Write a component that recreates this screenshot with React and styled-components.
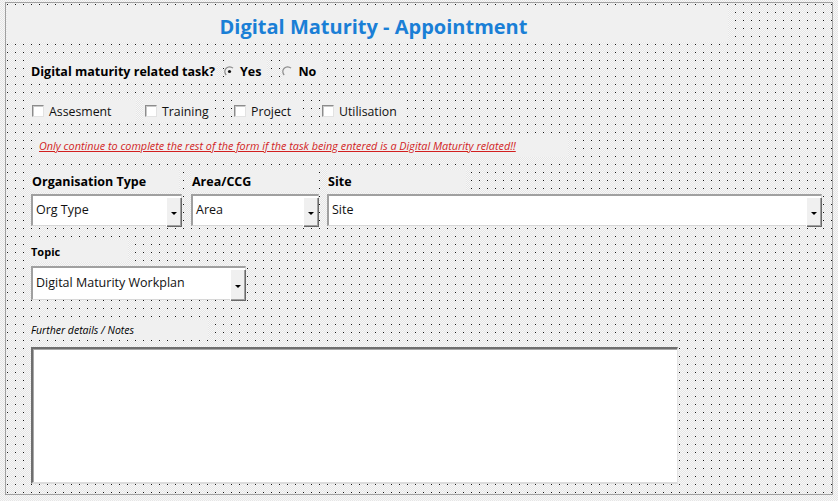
import React from "react"
import styled, { createGlobalStyle } from "styled-components"

const GlobalStyle = createGlobalStyle`
  html, body {
    margin: 0;
    padding: 0;
  }
  body {
    font-family: "Open Sans", "Noto Sans", sans-serif;
    background: #efefef;
  }
`

// hatched designer background, dots go on the form itself
const Page = styled.div`
  width: 838px;
  height: 501px;
  overflow: hidden;
  background-color: #f0f0f0;
  background-image: repeating-conic-gradient(#f7f7f7 0 25%, #e6e6e6 0 50%);
  background-size: 2px 2px;
  padding: 2px 0 0 5px;
  box-sizing: border-box;
`

const Form = styled.div`
  width: 828px;
  height: 493px;
  box-sizing: border-box;
  border: 1px solid #a0a0a0;
  background-color: #f0f0f0;
  background-image:
    conic-gradient(at 1px 1px, transparent 75%, #111 0),
    repeating-conic-gradient(#f7f7f7 0 25%, #e6e6e6 0 50%);
  background-size: 8px 8px, 2px 2px;
  background-position: 1px 1px, 0 0;
  display: flex;
  flex-direction: column;
  padding-left: 24px;
`

const Title = styled.div`
  margin: 2px 0 0 -23px;
  width: 721px;
  height: 37px;
  background: #f0f0f0;
  display: flex;
  align-items: center;
  justify-content: center;
  padding: 5px 0 0 12px;
  box-sizing: border-box;
  color: #1a7fd6;
  font-size: 20px;
  font-weight: 700;
`

const Row = styled.div`
  display: flex;
  align-items: center;
  margin-top: ${p => p.$top}px;
  height: ${p => p.$h || 22}px;
`

const Label = styled.div`
  background: #f0f0f0;
  height: ${p => p.$h || 22}px;
  width: ${p => p.$w}px;
  margin-left: ${p => p.$left || 0}px;
  display: flex;
  align-items: center;
  padding-left: ${p => p.$pad || 1}px;
  box-sizing: border-box;
  color: #000;
  font-size: ${p => p.$size || 12.5}px;
  font-weight: ${p => (p.$bold ? 700 : 400)};
  font-style: ${p => (p.$italic ? "italic" : "normal")};
  white-space: nowrap;
`

const Option = styled.div`
  display: flex;
  align-items: center;
  gap: 5px;
  margin-left: ${p => p.$left}px;
  height: 22px;
  padding-right: 6px;
  background: #f0f0f0;
  font-size: 12.5px;
  font-weight: 700;
`

const Check = styled.div`
  display: flex;
  align-items: center;
  gap: 5px;
  width: ${p => p.$w}px;
  margin-left: ${p => p.$left}px;
  height: 22px;
  padding-left: 2px;
  box-sizing: border-box;
  background: #f0f0f0;
  font-size: 12.3px;
  color: #111;
`

const Box = styled.span`
  width: 12px;
  height: 12px;
  box-sizing: border-box;
  background: #fff;
  border-top: 1px solid #8c8c8c;
  border-left: 1px solid #8c8c8c;
  border-right: 1px solid #e2e2e2;
  border-bottom: 1px solid #e2e2e2;
  box-shadow: inset 1px 1px 0 #c8c8c8;
`

const Warning = styled.div`
  margin: 12px 0 0 5px;
  width: 533px;
  height: 23px;
  background: #f0f0f0;
  display: flex;
  align-items: center;
  padding-left: 4px;
  box-sizing: border-box;
  color: #d21f1f;
  font-size: 10.85px;
  font-style: italic;
  text-decoration: underline;
  white-space: nowrap;
`

const Fields = styled.div`
  display: grid;
  grid-template-columns: 160px 136px 495px;
  margin-top: ${p => p.$top}px;
  margin-left: 1px;
`

const Combo = styled.div`
  position: relative;
  width: ${p => p.$w}px;
  height: ${p => p.$h}px;
  box-sizing: border-box;
  background: #fff;
  border-top: 2px solid #a0a0a0;
  border-left: 2px solid #a0a0a0;
  border-right: 1px solid #d8d8d8;
  border-bottom: 1px solid #d8d8d8;
  display: flex;
  align-items: center;
  padding: 0 0 2px 3px;
  font-size: 12.5px;
  color: #111;
  white-space: nowrap;
`

const DropButton = styled.span`
  position: absolute;
  right: 0;
  top: 1px;
  bottom: -1px;
  width: 15px;
  background: #f0f0f0;
  box-sizing: border-box;
  border-left: 1px solid #fff;
  border-top: 1px solid #fff;
  box-shadow: inset -1px -1px 0 #a0a0a0, 1px 1px 0 #696969;
  display: flex;
  align-items: center;
  justify-content: center;
  &::after {
    content: "";
    border-left: 3px solid transparent;
    border-right: 3px solid transparent;
    border-top: 3px solid #000;
    margin-top: 2px;
  }
`

const Notes = styled.div`
  margin: 7px 0 0 1px;
  width: 647px;
  height: 137px;
  box-sizing: border-box;
  background: #fff;
  border-top: 2px solid #6e6e6e;
  border-left: 2px solid #6e6e6e;
  border-right: 1px solid #e4e4e4;
  border-bottom: 2px solid #dcdcdc;
  box-shadow: inset 1px 1px 0 #a8a8a8;
`

const Radio = ({ checked }) => (
  <svg width="11" height="11" viewBox="0 0 11 11">
    <path d="M2.2 9 A4.5 4.5 0 0 1 9 2.2" stroke="#8a8a8a" strokeWidth="1.2" fill="none" />
    {checked && <circle cx="5.5" cy="5.5" r="1.6" fill="#111" />}
  </svg>
)

const DropCombo = ({ w, h, children }) => (
  <Combo $w={w} $h={h}>
    {children}
    <DropButton />
  </Combo>
)

export default function App() {
  return (
    <>
      <GlobalStyle />
      <Page>
        <Form>
          <Title>Digital Maturity - Appointment</Title>

          <Row $top={18}>
            <Label $w={187} $bold>Digital maturity related task?</Label>
            <Option $left={7}><Radio checked />Yes</Option>
            <Option $left={15}><Radio />No</Option>
          </Row>

          <Row $top={18}>
            <Check $w={106}><Box />Assesment</Check>
            <Check $w={72} $left={7}><Box />Training</Check>
            <Check $w={70} $left={17}><Box />Project</Check>
            <Check $w={86} $left={18}><Box />Utilisation</Check>
          </Row>

          <Warning>
            Only continue to complete the rest of the form if the task being entered is a Digital Maturity related!!
          </Warning>

          <Fields $top={13}>
            <Label $w={148} $bold>Organisation Type</Label>
            <Label $w={128} $bold>Area/CCG</Label>
            <Label $w={139} $bold>Site</Label>
            <div style={{ marginTop: 2 }}>
              <DropCombo w={151} h={32}>Org Type</DropCombo>
            </div>
            <div style={{ marginTop: 2 }}>
              <DropCombo w={128} h={32}>Area</DropCombo>
            </div>
            <div style={{ marginTop: 2 }}>
              <DropCombo w={495} h={32}>Site</DropCombo>
            </div>
          </Fields>

          <Label $w={98} $bold $size={11} style={{ marginTop: 14 }}>Topic</Label>
          <div style={{ marginTop: 4, marginLeft: 1 }}>
            <DropCombo w={215} h={34}>Digital Maturity Workplan</DropCombo>
          </div>

          <Label $w={178} $h={20} $italic $size={10.5} style={{ marginTop: 20 }}>
            Further details / Notes
          </Label>
          <Notes />
        </Form>
      </Page>
    </>
  )
}
